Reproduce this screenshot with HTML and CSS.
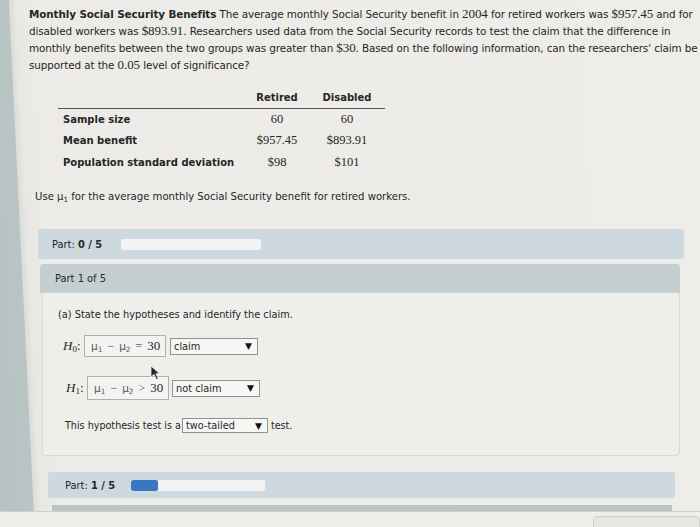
FILE: index.html
```html
<!DOCTYPE html>
<html>
<head>
<meta charset="utf-8">
<link rel="stylesheet" href="styles.css">
</head>
<body>
<div class="screen">
  <div class="page">
    <p class="intro"><b>Monthly Social Security Benefits</b> The average monthly Social Security benefit in <span class="num">2004</span> for retired workers was <span class="num">$957.45</span> and for<br>disabled workers was <span class="num">$893.91</span>. Researchers used data from the Social Security records to test the claim that the difference in<br>monthly benefits between the two groups was greater than <span class="num">$30</span>. Based on the following information, can the researchers' claim be<br>supported at the <span class="num">0.05</span> level of significance?</p>

    <table class="data">
      <thead>
        <tr><th></th><th>Retired</th><th>Disabled</th></tr>
      </thead>
      <tbody>
        <tr><td class="lbl">Sample size</td><td class="num">60</td><td class="num">60</td></tr>
        <tr><td class="lbl">Mean benefit</td><td class="num">$957.45</td><td class="num">$893.91</td></tr>
        <tr><td class="lbl">Population standard deviation</td><td class="num">$98</td><td class="num">$101</td></tr>
      </tbody>
    </table>

    <p class="use">Use <span class="mu">μ<sub>1</sub></span> for the average monthly Social Security benefit for retired workers.</p>

    <div class="partbar top">
      <span>Part: <b>0 / 5</b></span>
      <div class="progress"></div>
    </div>

    <div class="part">
      <div class="part-head">Part 1 of 5</div>
      <div class="part-body">
        <p class="q">(a) State the hypotheses and identify the claim.</p>
        <div class="hyp h0">
          <span class="hl"><i>H</i><sub>0</sub>:</span>
          <span class="expr"><span class="mu">μ<sub>1</sub></span><span class="op">−</span><span class="mu">μ<sub>2</sub></span><span class="op">=</span><span>30</span></span>
          <span class="sel w88">claim<span class="tri">▼</span></span>
        </div>
        <div class="hyp h1">
          <span class="hl"><i>H</i><sub>1</sub>:</span>
          <span class="expr"><span class="mu">μ<sub>1</sub></span><span class="op">−</span><span class="mu">μ<sub>2</sub></span><span class="op">&gt;</span><span>30</span></span>
          <span class="sel w88">not claim<span class="tri">▼</span></span>
        </div>
        <div class="tail">This hypothesis test is a <span class="sel w86">two-tailed<span class="tri">▼</span></span> test.</div>
      </div>
    </div>

    <div class="partbar bottom">
      <span>Part: <b>1 / 5</b></span>
      <div class="progress"><div class="fill" style="width:20%"></div></div>
    </div>
    <div class="nextbar"></div>
    <div class="footer"><div class="btn"></div></div>
  </div>
  <svg class="cursor" width="12" height="16" viewBox="0 0 12 16"><path d="M1 1 L1 12 L4 9.5 L6.5 14.5 L8.3 13.6 L5.8 8.8 L9.5 8.6 Z" fill="#222" stroke="#f4f4f4" stroke-width="0.8"/></svg>
</div>
</body>
</html>
```

FILE: styles.css
```css
html, body {
  margin: 0;
  padding: 0;
}
body {
  width: 700px;
  height: 527px;
  overflow: hidden;
  font-family: "DejaVu Sans", Verdana, sans-serif;
  color: #262626;
  background: linear-gradient(87.2deg, #b6c2c2 0, #b9c4c4 34px, #dcdcd8 35px, #e7e7e3 41px, #ecebe7 60px, #eeede9 100%);
}
.screen {
  position: relative;
  width: 700px;
  height: 527px;
}
.num {
  font-family: "Liberation Serif", "Times New Roman", serif;
}
.intro {
  margin: 0;
  padding: 6px 0 0 29px;
  font-size: 10.4px;
  line-height: 17px;
  letter-spacing: -0.1px;
}
.intro .num {
  font-size: 13px;
  line-height: 0;
}
.data {
  margin: 12px 0 0 58px;
  border-collapse: collapse;
  font-size: 10px;
}
.data th {
  font-weight: bold;
  height: 22px;
  padding: 0;
  border-bottom: 1px solid #555;
  vertical-align: middle;
  text-align: center;
}
.data th:nth-child(2) { width: 64px; }
.data th:nth-child(3) { width: 76px; }
.data td {
  height: 22px;
  padding: 0;
  vertical-align: middle;
}
.data td.lbl {
  font-weight: bold;
  padding-left: 5px;
  width: 182px;
}
.data td.num {
  text-align: center;
  font-size: 12.5px;
}
.data tbody tr:first-child td { height: 20px; }
.use {
  margin: 18px 0 0 35px;
  font-size: 10.1px;
}
.mu {
  font-family: "DejaVu Sans", sans-serif;
}
sub {
  font-size: 70%;
  vertical-align: -2px;
  line-height: 0;
}
.partbar {
  display: flex;
  align-items: center;
  background: #cdd8df;
  border-radius: 3px;
  font-size: 9.9px;
}
.partbar.top {
  margin: 27px 16px 0 38px;
  height: 30px;
  padding-left: 14px;
}
.partbar.top .progress {
  margin-left: 19px;
  width: 140px;
}
.progress {
  height: 11px;
  background: #f2f3f2;
  border-radius: 2px;
  overflow: hidden;
}
.fill {
  height: 100%;
  background: #3b76c2;
  border-radius: 2px;
}
.part {
  margin: 5px 20px 0 40px;
}
.part-head {
  background: #c6cfd0;
  height: 29px;
  display: flex;
  align-items: center;
  padding-left: 15px;
  font-size: 9.9px;
  border-radius: 3px 3px 0 0;
}
.part-body {
  margin: 0 0 0 2px;
  background: #eeeeeb;
  border: 1px solid #d9d9d5;
  border-top: none;
  height: 162px;
  border-radius: 0 0 4px 4px;
  padding: 0 0 0 15px;
  font-size: 9.8px;
}
.q {
  margin: 0;
  padding-top: 16px;
}
.hyp {
  display: flex;
  align-items: center;
}
.h0 { margin: 15px 0 0 5px; }
.h1 { margin: 19px 0 0 8px; }
.hl {
  font-family: "Liberation Serif", serif;
  font-size: 13px;
  width: 21px;
}
.expr {
  display: inline-flex;
  align-items: center;
  height: 22px;
  padding: 0 5px 0 6px;
  border: 1px solid #a9b2b2;
  background: #f3f3f1;
  font-family: "Liberation Serif", serif;
  font-size: 13px;
  box-sizing: border-box;
  width: 82px;
}
.expr .mu { font-size: 10.5px; color: #555; }
.expr .op { color: #555; margin: 0 5px; font-size: 12px; }
.h1 .expr { height: 24px; }
.sel {
  display: inline-flex;
  align-items: center;
  justify-content: space-between;
  height: 15px;
  margin-left: 4px;
  padding: 0 5px 0 3px;
  border: 1px solid #8e9494;
  background: #f6f6f4;
  font-size: 9.8px;
  box-sizing: border-box;
}
.sel.w88 { width: 88px; height: 17px; }
.h1 .sel { margin-left: 3px; }
.sel.w86 { width: 86px; margin: 0 2px 0 0; }
.tri {
  font-size: 9px;
  color: #111;
}
.tail {
  margin: 18px 0 0 7px;
  display: flex;
  align-items: center;
  gap: 1px;
  font-size: 9.6px;
}
.partbar.bottom {
  margin: 16px 25px 0 48px;
  height: 26px;
  padding-left: 17px;
}
.partbar.bottom .progress {
  margin-left: 16px;
  width: 134px;
}
.nextbar {
  margin: 7px 28px 0 52px;
  height: 6px;
  background: #bcc3c3;
}
.footer {
  border-top: 1px solid #cfcfcc;
  height: 20px;
  background: #eeeeea;
  position: relative;
}
.btn {
  position: absolute;
  right: 0;
  top: 4px;
  width: 105px;
  height: 20px;
  border: 1px solid #cfd0cc;
  border-radius: 4px;
  background: #e6e6e3;
}
.cursor {
  position: absolute;
  left: 150px;
  top: 365px;
}
```
